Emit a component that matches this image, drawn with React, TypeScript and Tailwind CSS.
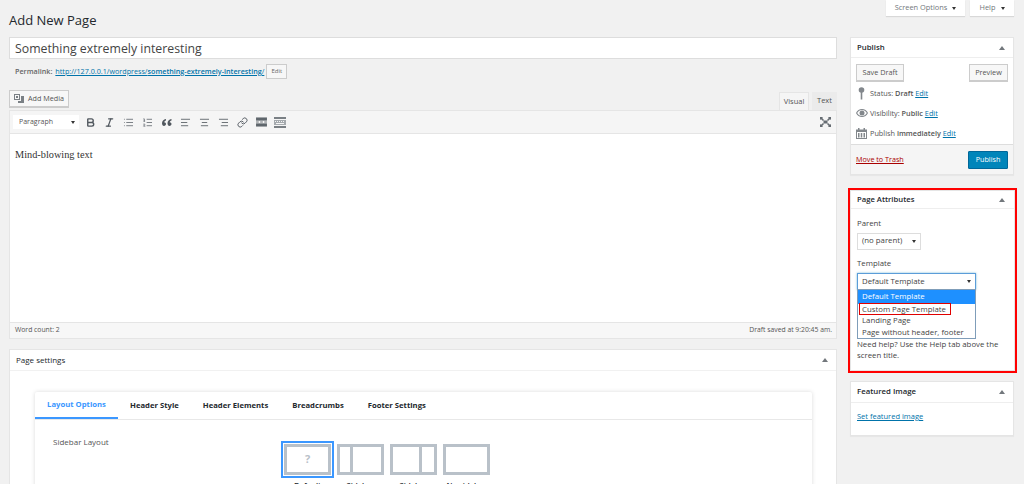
import { Bold, Italic, List, ListOrdered, AlignLeft, AlignCenter, AlignRight, Link } from "lucide-react";

const font = "font-['Open_Sans',sans-serif]";

function Caret({ className = "" }: { className?: string }) {
    return <span className={`inline-block h-0 w-0 border-x-[2.5px] border-t-[3px] border-x-transparent border-t-[#333] ${className}`} />;
}

function CollapseUp() {
    return <span className="h-0 w-0 border-x-[3px] border-b-[4px] border-x-transparent border-b-[#72777c]" />;
}

function QuoteIcon() {
    return (
        <svg width="11" height="11" viewBox="0 0 11 11" fill="#50575e">
            <path d="M5 2C2.500 2.600 1 4 1 6.200 1 7.800 1.800 9 3 9s2-.8 2-1.900S4.200 5.300 3.200 5.300C3.300 4.600 4 4 5 3.600zM10.500 2C8 2.600 6.500 4 6.500 6.200c0 1.600.8 2.800 2 2.800s2-.8 2-1.900-.8-1.800-1.800-1.800c.1-.7.8-1.300 1.800-1.700z" />
        </svg>
    );
}

function ReadMoreIcon() {
    return (
        <svg width="11" height="10" viewBox="0 0 12 11" fill="#5f666c">
            <rect x="0" y="0.5" width="12" height="3.5" />
            <rect x="0" y="5" width="3" height="1" />
            <rect x="4.5" y="5" width="3" height="1" />
            <rect x="9" y="5" width="3" height="1" />
            <rect x="0" y="7" width="12" height="3.5" />
        </svg>
    );
}

function ToolbarToggleIcon() {
    return (
        <svg width="12" height="11" viewBox="0 0 12 11" fill="#7a8085">
            <rect x="0" y="0" width="12" height="2" />
            <rect x="0" y="9" width="12" height="2" />
            <rect x="0" y="3" width="12" height="5" fill="#a5aaae" />
            <rect x="1" y="4" width="1" height="1" fill="#f5f5f5" />
            <rect x="3" y="4" width="1" height="1" fill="#f5f5f5" />
            <rect x="5" y="4" width="1" height="1" fill="#f5f5f5" />
            <rect x="7" y="4" width="1" height="1" fill="#f5f5f5" />
            <rect x="9" y="4" width="1" height="1" fill="#f5f5f5" />
            <rect x="2" y="6" width="8" height="1" fill="#f5f5f5" />
        </svg>
    );
}

function FullscreenIcon() {
    return (
        <svg width="11" height="10" viewBox="0 0 11 10" fill="#666c72">
            <path d="M0 0h3L2.200 1 4 3 3 4 1 2.200 0 3zM11 0H8l.8 1L7 3l1 1 2-1.800L11 3zM0 10h3l-.8-1L4 7 3 6 1 7.800 0 7zM11 10H8l.8-1L7 7l1-1 2 1.800L11 7z" />
            <rect x="3.500" y="3.500" width="4" height="3" />
        </svg>
    );
}

function PinIcon() {
    return (
        <svg width="9" height="13" viewBox="0 0 9 13" fill="#82878c">
            <circle cx="4.500" cy="3" r="2.800" />
            <rect x="3.700" y="5" width="1.600" height="7.500" />
        </svg>
    );
}

function EyeIcon() {
    return (
        <svg width="12" height="8" viewBox="0 0 12 8" fill="#82878c">
            <path fillRule="evenodd" d="M6 0c2.600 0 4.800 1.600 6 4-1.200 2.400-3.400 4-6 4S1.200 6.400 0 4c1.200-2.400 3.400-4 6-4zM6 1C4 1 2.300 2.200 1.200 4 2.300 5.800 4 7 6 7s3.700-1.200 4.800-3C9.700 2.200 8 1 6 1z" />
            <circle cx="6" cy="4" r="2.500" />
        </svg>
    );
}

function CalendarIcon() {
    return (
        <svg width="11" height="11" viewBox="0 0 11 11" fill="#82878c">
            <rect x="0" y="1.500" width="11" height="9.500" />
            <rect x="2" y="0" width="1.500" height="3" />
            <rect x="7.500" y="0" width="1.500" height="3" />
            <rect x="1" y="4" width="9" height="6" fill="#fff" />
            <rect x="2" y="5" width="1.500" height="4.500" />
            <rect x="4.750" y="5" width="1.500" height="4.500" />
            <rect x="7.500" y="5" width="1.500" height="4.500" />
        </svg>
    );
}

function AddMediaIcon() {
    return (
        <svg width="11" height="10" viewBox="0 0 11 10" fill="#7a8085">
            <path fillRule="evenodd" d="M0 0h6v6H0zM1 1v4h4V1z" />
            <rect x="2" y="2" width="2" height="2" />
            <path d="M7 2h3v7H4V7h3z" />
        </svg>
    );
}

function ToolbarIcons() {
    const lucide = { size: 11, className: "text-[#50575e]" };
    const items = [
        <Bold key="b" {...lucide} strokeWidth={3} />,
        <Italic key="i" {...lucide} strokeWidth={2.6} />,
        <List key="ul" {...lucide} strokeWidth={1.6} />,
        <ListOrdered key="ol" {...lucide} strokeWidth={1.6} />,
        <QuoteIcon key="q" />,
        <AlignLeft key="al" {...lucide} strokeWidth={1.8} />,
        <AlignCenter key="ac" {...lucide} strokeWidth={1.8} />,
        <AlignRight key="ar" {...lucide} strokeWidth={1.8} />,
        <Link key="l" {...lucide} strokeWidth={2} />,
        <ReadMoreIcon key="m" />,
        <ToolbarToggleIcon key="t" />,
    ];
    return (
        <div className="ml-[4px] flex items-center gap-[5px]">
            {items.map((icon, i) => (
                <span key={i} className="flex w-[14px] justify-center">{icon}</span>
            ))}
        </div>
    );
}

function Publish() {
    return (
        <div className="border border-[#e5e5e5] bg-white shadow-[0_1px_1px_rgba(0,0,0,0.04)]">
            <div className="flex h-[20px] items-center justify-between border-b border-[#eee] pl-[6px] pr-[8px] text-[7.8px] font-semibold text-[#23282d]">
                <span>Publish</span>
                <CollapseUp />
            </div>
            <div className="px-[5px] pt-[6px] text-[7.3px] text-[#555]">
                <div className="flex items-center justify-between">
                    <span className="flex h-[17px] w-[48px] items-center justify-center border border-[#ccc] bg-[#f7f7f7] shadow-[0_1px_0_#ccc]">Save Draft</span>
                    <span className="flex h-[17px] w-[39px] items-center justify-center border border-[#ccc] bg-[#f7f7f7] shadow-[0_1px_0_#ccc]">Preview</span>
                </div>
                <div className="mt-[2px] flex h-[20px] items-center">
                    <span className="flex w-[14px] justify-center pr-[3px]"><PinIcon /></span>
                    <span>Status: <b className="font-semibold">Draft</b> <a className="text-[#0073aa] underline">Edit</a></span>
                </div>
                <div className="flex h-[20px] items-center">
                    <span className="flex w-[14px] justify-start"><EyeIcon /></span>
                    <span>Visibility: <b className="font-semibold">Public</b> <a className="text-[#0073aa] underline">Edit</a></span>
                </div>
                <div className="flex h-[20px] items-center">
                    <span className="flex w-[14px] justify-start"><CalendarIcon /></span>
                    <span>Publish <b className="font-semibold">immediately</b> <a className="text-[#0073aa] underline">Edit</a></span>
                </div>
            </div>
            <div className="mt-[1px] flex h-[30px] items-center justify-between border-t border-[#ddd] bg-[#f5f5f5] pl-[5px] pr-[5px] text-[7.2px]">
                <a className="text-[#a00] underline">Move to Trash</a>
                <span className="flex h-[18px] w-[40px] items-center justify-center rounded-[1px] border border-[#006799] bg-[#0085ba] text-white">Publish</span>
            </div>
        </div>
    );
}

function PageAttributes() {
    return (
        <div className="-ml-[2px] -mr-[3px] mt-[13px] border-2 border-[#f00]">
            <div className="border border-[#e5e5e5] bg-white">
                <div className="flex h-[18px] items-center justify-between border-b border-[#eee] pl-[6px] pr-[9px] text-[7.7px] font-semibold text-[#23282d]">
                    <span>Page Attributes</span>
                    <CollapseUp />
                </div>
                <div className="h-[161px] pl-[6px] pr-[7px] pt-[9px] text-[7.8px] text-[#444]">
                    <div className="font-medium">Parent</div>
                    <div className="mt-[3px] flex h-[17px] w-[64px] items-center justify-between border border-[#ddd] pl-[4px] pr-[4px]">
                        <span>(no parent)</span>
                        <Caret />
                    </div>
                    <div className="mt-[8px] font-medium">Template</div>
                    <div className="relative mt-[4px]">
                        <div className="flex h-[17px] w-[119px] items-center justify-between border border-[#5b9dd9] pl-[4px] pr-[4px] shadow-[0_0_2px_rgba(30,140,190,0.6)]">
                            <span>Default Template</span>
                            <Caret />
                        </div>
                        <div className="absolute left-0 top-[16px] w-[119px] border border-[#7f9db9] bg-white leading-[11.5px]">
                            <div className="bg-[#1e90ff] py-[1px] pl-[4px] text-white">Default Template</div>
                            <div className="pl-[4px]">Custom Page Template</div>
                            <div className="pl-[4px]">Landing Page</div>
                            <div className="pl-[4px]">Page without header, footer</div>
                            <div className="absolute left-[1px] top-[13px] h-[12px] w-[92px] border-[1.5px] border-[#e00000]" />
                        </div>
                    </div>
                    <p className="mt-[49px] leading-[11px]">Need help? Use the Help tab above the screen title.</p>
                </div>
            </div>
        </div>
    );
}

function Featured() {
    return (
        <div className="mt-[8px] border border-[#e5e5e5] bg-white shadow-[0_1px_1px_rgba(0,0,0,0.04)]">
            <div className="flex h-[21px] items-center justify-between border-b border-[#eee] pl-[6px] pr-[8px] text-[7.8px] font-semibold text-[#23282d]">
                <span>Featured Image</span>
                <CollapseUp />
            </div>
            <div className="h-[32px] pl-[6px] pt-[8px] text-[7.5px]">
                <a className="text-[#0073aa] underline">Set featured image</a>
            </div>
        </div>
    );
}

function LayoutChoice({ kind, label, className = "" }: { kind: "default" | "left" | "right" | "none"; label: string; className?: string }) {
    const selected = kind === "default";
    return (
        <div className={`flex flex-col items-center ${className}`}>
            <div className={selected ? "border-2 border-[#3b97ff] p-[1px]" : "my-[3px]"}>
                <div className={`flex h-[31px] w-[47px] border-[3.5px] border-[#b9c1c9] bg-white ${selected ? "items-center justify-center" : ""}`}>
                    {selected && <span className="text-[11px] font-bold text-[#b9c1c9]">?</span>}
                    {kind === "left" && <div className="w-[13px] border-r-[3px] border-[#b9c1c9]" />}
                    {kind === "right" && <div className="w-[29px] border-r-[3px] border-[#b9c1c9]" />}
                </div>
            </div>
            <span className="mt-[2px] text-[7.6px] font-semibold text-[#23282d]">{label}</span>
        </div>
    );
}

export default function App() {
    const tabs = ["Header Style", "Header Elements", "Breadcrumbs", "Footer Settings"];
    return (
        <div className={`h-[484px] w-[1024px] overflow-hidden bg-[#f1f1f1] ${font}`}>
            <div className="flex justify-end gap-[5px] pr-[10px]">
                <span className="flex h-[16px] w-[79px] items-center justify-center gap-[5px] bg-white text-[7.4px] text-[#72777c] shadow-[0_1px_1px_rgba(0,0,0,0.1)]">Screen Options <Caret /></span>
                <span className="flex h-[16px] w-[44px] items-center justify-center gap-[5px] bg-white text-[7.4px] text-[#72777c] shadow-[0_1px_1px_rgba(0,0,0,0.1)]">Help <Caret /></span>
            </div>
            <div className="flex items-start pl-[9px] pr-[10px]">
                <div className="w-[828px]">
                    <h1 className="-mt-[6px] mb-[6px] text-[13px] leading-[21px] text-[#23282d]">Add New Page</h1>
                    <div className="h-[22px] border border-[#ddd] bg-white pl-[5px] text-[12.3px] leading-[21px] text-[#444]">Something extremely interesting</div>
                    <div className="mt-[4px] flex h-[16px] items-center pl-[6px] text-[7.2px] text-[#666]">
                        <span className="font-semibold">Permalink:</span>
                        <a className="ml-[3px] text-[#0073aa] underline">http://127.0.0.1/wordpress/<b className="font-semibold">something-extremely-interesting</b>/</a>
                        <span className="ml-[2px] flex h-[15px] w-[21px] items-center justify-center border border-[#ccc] bg-[#f7f7f7] text-[6px]">Edit</span>
                    </div>
                    <div className="mt-[11px] flex items-end justify-between">
                        <span className="mb-[3px] flex h-[17px] w-[60px] items-center justify-center gap-[3px] border border-[#ccc] bg-[#f7f7f7] text-[7.2px] text-[#555] shadow-[0_1px_0_#ccc]">
                            <AddMediaIcon />Add Media
                        </span>
                        <div className="flex items-end text-[7.5px] text-[#555]">
                            <span className="flex h-[18px] w-[30px] items-center justify-center border border-b-0 border-[#e5e5e5] bg-[#f5f5f5]">Visual</span>
                            <span className="ml-[3px] flex h-[18px] w-[25px] items-center justify-center bg-[#ebebeb]">Text</span>
                        </div>
                    </div>
                    <div className="border border-[#e5e5e5] bg-white">
                        <div className="flex h-[23px] items-center justify-between border-b border-[#e5e5e5] bg-[#f5f5f5] pl-[3px] pr-[5px]">
                            <div className="flex items-center">
                                <div className="flex h-[14px] w-[66px] items-center justify-between bg-white pl-[6px] pr-[4px] text-[7px] text-[#555]">
                                    <span>Paragraph</span>
                                    <Caret />
                                </div>
                                <ToolbarIcons />
                            </div>
                            <FullscreenIcon />
                        </div>
                        <div className="h-[188px] pl-[5px] pt-[13px] font-['Liberation_Serif',serif] text-[10.3px] text-[#333]">Mind-blowing text</div>
                        <div className="flex h-[16px] items-center justify-between border-t border-[#e5e5e5] bg-[#f7f7f7] pl-[5px] pr-[4px] text-[6.8px] text-[#555]">
                            <span>Word count: 2</span>
                            <span>Draft saved at 9:20:45 am.</span>
                        </div>
                    </div>
                    <div className="mt-[10px] h-[200px] border border-[#e5e5e5] bg-white">
                        <div className="flex h-[21px] items-center justify-between border-b border-[#f1f1f1] pl-[6px] pr-[8px] text-[8px] text-[#23282d]">
                            <span className="font-medium">Page settings</span>
                            <CollapseUp />
                        </div>
                        <div className="ml-[25px] mt-[21px] w-[777px] rounded-[2px] bg-white shadow-[0_0_4px_rgba(0,0,0,0.15)]">
                            <div className="flex h-[28px] items-stretch border-b border-[#e8e8e8] text-[7.7px] font-bold text-[#23282d]">
                                <span className="flex w-[83px] items-center justify-center border-b-2 border-[#3b97ff] text-[#3b97ff]">Layout Options</span>
                                {tabs.map((t) => (
                                    <span key={t} className="flex items-center px-[12px]">{t}</span>
                                ))}
                            </div>
                            <div className="flex pl-[18px] pt-[16px]">
                                <span className="w-[228px] text-[8px] text-[#555]">Sidebar Layout</span>
                                <div className="mt-[5px] flex">
                                    <LayoutChoice kind="default" label="Default" />
                                    <LayoutChoice kind="left" label="Sidebar" className="ml-[3px]" />
                                    <LayoutChoice kind="right" label="Sidebar" className="ml-[6px]" />
                                    <LayoutChoice kind="none" label="No sidebar" className="ml-[6px]" />
                                </div>
                            </div>
                        </div>
                    </div>
                </div>
                <div className="ml-[13px] mt-[21px] w-[164px]">
                    <Publish />
                    <PageAttributes />
                    <Featured />
                </div>
            </div>
        </div>
    );
}
